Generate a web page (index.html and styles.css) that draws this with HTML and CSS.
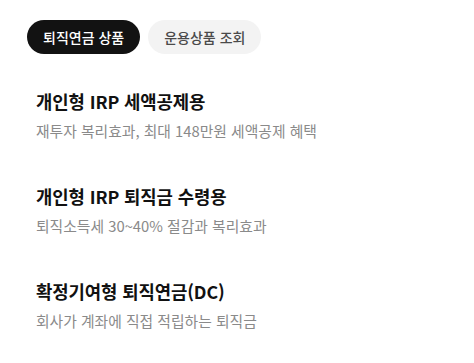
FILE: index.html
```html
<!DOCTYPE html>
<html lang="ko">
<head>
<meta charset="utf-8">
<link rel="stylesheet" href="styles.css">
</head>
<body>
<div class="page">
  <div class="tabs">
    <button class="tab tab-active">퇴직연금 상품</button>
    <button class="tab">운용상품 조회</button>
  </div>
  <ul class="list">
    <li class="item">
      <div class="title">개인형 IRP 세액공제용</div>
      <div class="desc">재투자 복리효과, 최대 148만원 세액공제 혜택</div>
    </li>
    <li class="item">
      <div class="title">개인형 IRP 퇴직금 수령용</div>
      <div class="desc">퇴직소득세 30~40% 절감과 복리효과</div>
    </li>
    <li class="item">
      <div class="title">확정기여형 퇴직연금(DC)</div>
      <div class="desc">회사가 계좌에 직접 적립하는 퇴직금</div>
    </li>
  </ul>
</div>
</body>
</html>
```

FILE: styles.css
```css
* { box-sizing: border-box; }
html, body { margin: 0; padding: 0; background: #fff; }
body {
  font-family: "Noto Sans CJK KR", "Noto Sans", sans-serif;
  color: #111;
}
.page {
  padding: 20px 27px 0 27px;
}
.tabs {
  display: flex;
  gap: 8px;
}
.tab {
  font-family: inherit;
  border: 0;
  height: 34px;
  padding: 0 16px;
  border-radius: 17px;
  font-size: 14px;
  font-weight: 500;
  background: #f3f3f3;
  color: #4a4a4a;
  line-height: 34px;
}
.tab-active {
  background: #121212;
  color: #fff;
}
.list {
  list-style: none;
  margin: 35px 0 0 9px;
  padding: 0;
  display: flex;
  flex-direction: column;
  gap: 43px;
}
.title {
  font-size: 17.8px;
  font-weight: 700;
  line-height: 25px;
  color: #111;
  letter-spacing: -0.1px;
}
.desc {
  margin-top: 6px;
  font-size: 14.8px;
  line-height: 21px;
  color: #8a8a8a;
}
```
